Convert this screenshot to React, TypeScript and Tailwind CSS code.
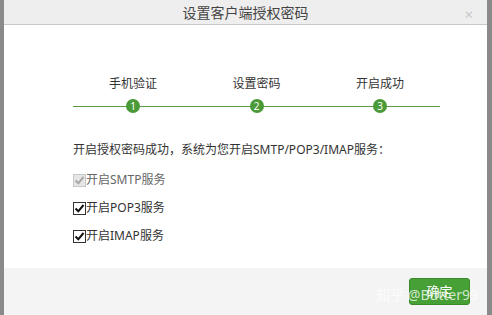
import React from "react";

const steps = [
  { n: 1, label: "手机验证" },
  { n: 2, label: "设置密码" },
  { n: 3, label: "开启成功" },
];

function Check({ disabled }: { disabled?: boolean }) {
  return (
    <span
      className={
        "w-[13px] h-[13px] flex items-center justify-center border " +
        (disabled ? "border-[#c8c8c8] bg-[#e6e6e6]" : "border-[#333] bg-white")
      }
    >
      <svg width="11" height="11" viewBox="0 0 11 11">
        <path
          d="M1.5 5.5 L4.3 8.3 L9.5 2"
          fill="none"
          stroke={disabled ? "#a8a8a8" : "#111"}
          strokeWidth="2"
        />
      </svg>
    </span>
  );
}

export default function App() {
  return (
    <div
      className="w-[492px] h-[315px] bg-[#8a8a8a] flex overflow-hidden"
      style={{ fontFamily: '"Noto Sans", "Noto Sans CJK SC", sans-serif' }}
    >
      <div className="ml-[4px] w-[483px] h-full bg-white flex flex-col">
        <div className="h-[25px] bg-[#eeeeee] border-b border-[#c8c8c8] flex items-center justify-center relative">
          <span className="text-[14px] text-[#444]">设置客户端授权密码</span>
          <span className="absolute right-[14px] top-[3px] text-[15px] text-[#c8c8c8]">×</span>
        </div>

        <div className="flex-1 flex flex-col pl-[69px]">
          <div className="relative w-[367px] mt-[52px] h-[38px]">
            <div className="absolute left-0 right-0 top-[29px] h-px bg-[#5d9a45]" />
            <div className="flex justify-between px-[53px]">
              {steps.map((s) => (
                <div key={s.n} className="flex flex-col items-center w-[14px]">
                  <span className="text-[12px] text-[#333] whitespace-nowrap leading-[14px]">{s.label}</span>
                  <span className="mt-[8px] w-[14px] h-[14px] rounded-full bg-[#4b9a38] text-white text-[10px] leading-[14px] text-center relative">
                    {s.n}
                  </span>
                </div>
              ))}
            </div>
          </div>

          <div className="mt-[27px] text-[12px] text-[#333] leading-[16px]">
            开启授权密码成功，系统为您开启SMTP/POP3/IMAP服务：
          </div>
          <div className="mt-[14px] flex flex-col gap-[12px] text-[12px] leading-[16px]">
            <label className="flex items-center text-[#666]">
              <Check disabled />
              <span>开启SMTP服务</span>
            </label>
            <label className="flex items-center text-[#333]">
              <Check />
              <span>开启POP3服务</span>
            </label>
            <label className="flex items-center text-[#333]">
              <Check />
              <span>开启IMAP服务</span>
            </label>
          </div>
        </div>

        <div className="h-[47px] bg-[#f4f4f4] flex items-center justify-end pr-[17px] relative">
          <button className="w-[61px] h-[27px] rounded-[3px] bg-[#46a035] border border-[#3a8a2c] text-white text-[13px]">
            确定
          </button>
          <span className="absolute right-[9px] top-[16px] text-[14px] text-white/75 whitespace-nowrap">
            知乎 @Butter99
          </span>
        </div>
      </div>
    </div>
  );
}
